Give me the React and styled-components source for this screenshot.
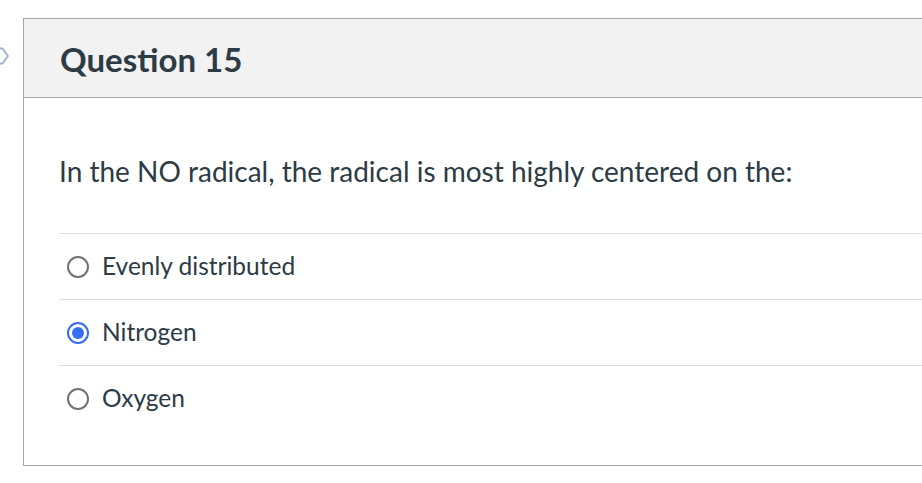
import React from 'react'
import styled, { createGlobalStyle } from 'styled-components'

const GlobalStyle = createGlobalStyle`
  body {
    margin: 0;
    background: #fff;
    font-family: Lato, "Noto Sans", sans-serif;
    color: #2d3b45;
    overflow: hidden;
  }
`;

const Page = styled.div`
  display: flex;
  align-items: flex-start;
  padding-top: 18px;
`;

const Marker = styled.div`
  width: 23px;
  flex-shrink: 0;
  padding-top: 29px;
  svg { display: block; }
`;

const Card = styled.div`
  flex: 1;
  border: 1px solid #a5a5a5;
  border-right: none;
  background: #fff;
`;

const Header = styled.div`
  height: 79px;
  box-sizing: border-box;
  background: #f2f2f2;
  border-bottom: 1px solid #a5a5a5;
  display: flex;
  align-items: center;
  padding-left: 36px;
`;

const Title = styled.h2`
  margin: 0;
  font-size: 33px;
  font-weight: 700;
  color: #2d3b45;
  padding-top: 2px;
`;

const Body = styled.div`
  padding: 54px 0 34px 35px;
`;

const Prompt = styled.p`
  margin: 0 0 43px;
  font-size: 28px;
  line-height: 38px;
`;

const Answers = styled.div`
  display: flex;
  flex-direction: column;
`;

const Answer = styled.label`
  display: flex;
  align-items: center;
  height: 66px;
  box-sizing: border-box;
  border-top: 1px solid #dcdcdc;
  padding: 0 0 2px 8px;
  font-size: 24.5px;
  gap: 13px;
`;

const Radio = styled.span`
  width: 22px;
  height: 22px;
  box-sizing: border-box;
  border-radius: 50%;
  border: 2px solid ${p => (p.$checked ? '#356df3' : '#727272')};
  display: flex;
  align-items: center;
  justify-content: center;
  flex-shrink: 0;
  margin-top: 2px;
  &::after {
    content: '';
    width: 12px;
    height: 12px;
    border-radius: 50%;
    background: #356df3;
    display: ${p => (p.$checked ? 'block' : 'none')};
  }
`;

const answers = [
  { text: 'Evenly distributed', checked: false },
  { text: 'Nitrogen', checked: true },
  { text: 'Oxygen', checked: false },
];

export default function App() {
  return (
    <>
      <GlobalStyle />
      <Page>
        <Marker>
          <svg width="10" height="18" viewBox="0 0 10 18">
            <polyline points="-4,1.5 2.5,1.5 8,9 2.5,16.5 -4,16.5" fill="none" stroke="#a2b4c7" strokeWidth="2" strokeLinejoin="round" />
          </svg>
        </Marker>
        <Card>
          <Header>
            <Title>Question 15</Title>
          </Header>
          <Body>
            <Prompt>In the NO radical, the radical is most highly centered on the:</Prompt>
            <Answers>
              {answers.map(a => (
                <Answer key={a.text}>
                  <Radio $checked={a.checked} />
                  {a.text}
                </Answer>
              ))}
            </Answers>
          </Body>
        </Card>
      </Page>
    </>
  )
}
